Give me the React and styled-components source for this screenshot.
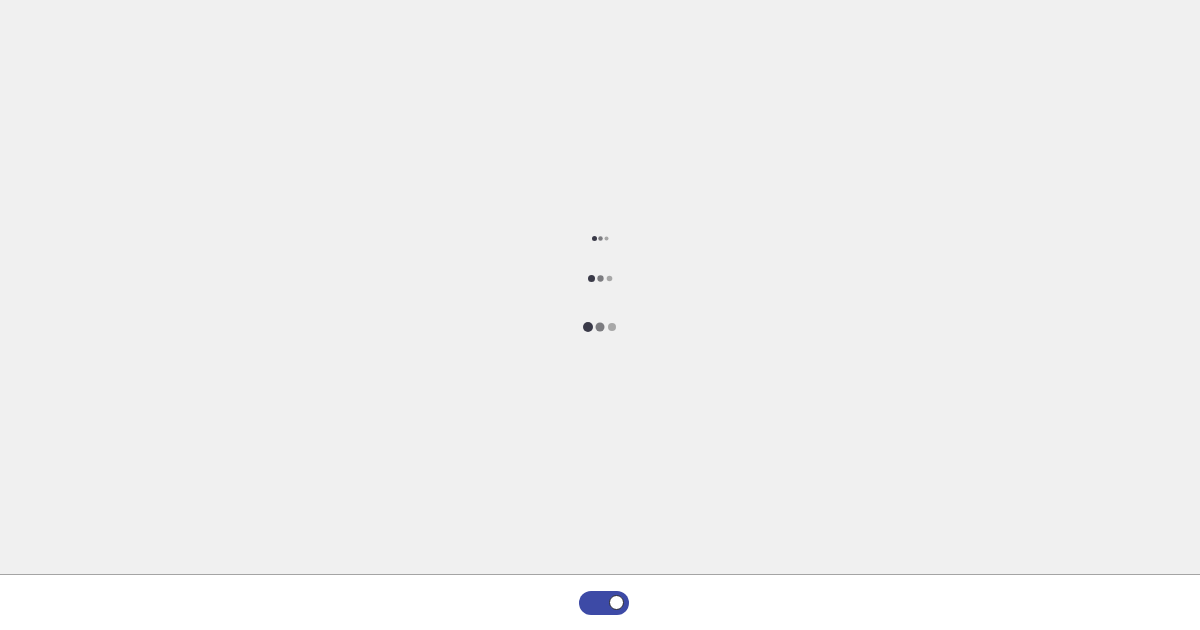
import React from "react";
import styled, { createGlobalStyle } from "styled-components";

const sizes = [
	{ size: 5, gap: 1, top: 236 },
	{ size: 7, gap: 2, top: 34 },
	{ size: 10, gap: 2, top: 40 },
];

const App = () => {
	return (
		<>
			<GlobalStyle />
			<Page>
				<Stage>
					{sizes.map((s, i) => (
						<DotRow key={i} $gap={s.gap} $top={s.top}>
							<Dot $size={s.size} $tone="dark" />
							<Dot $size={s.size} $tone="mid" />
							<Dot $size={s.size} $tone="light" />
						</DotRow>
					))}
				</Stage>
				<Footer>
					<Toggle aria-label="toggle">
						<Knob />
					</Toggle>
				</Footer>
			</Page>
		</>
	);
};

export default App;

/* ========== STYLES ========== */
const GlobalStyle = createGlobalStyle`
	html, body {
		margin: 0;
		padding: 0;
		font-family: "Liberation Sans", Arial, sans-serif;
		background: #ffffff;
	}
`;

const Page = styled.div`
	width: 1200px;
	height: 630px;
	display: flex;
	flex-direction: column;
`;

const Stage = styled.div`
	height: 574px;
	background-color: #f0f0f0;
	display: flex;
	flex-direction: column;
	align-items: center;
	border-bottom: 1px solid #a4a4a4;
`;

const DotRow = styled.div`
	display: flex;
	align-items: center;
	gap: ${(p) => p.$gap}px;
	margin-top: ${(p) => p.$top}px;
`;

const tones = {
	dark: { color: "#3a3a48", scale: 1 },
	mid: { color: "#7c7c80", scale: 0.9 },
	light: { color: "#a8a8a8", scale: 0.8 },
};

const Dot = styled.span`
	display: block;
	width: ${(p) => p.$size}px;
	height: ${(p) => p.$size}px;
	border-radius: 50%;
	background-color: ${(p) => tones[p.$tone].color};
	transform: scale(${(p) => tones[p.$tone].scale});
`;

const Footer = styled.div`
	flex: 1;
	background-color: #ffffff;
	display: flex;
	align-items: center;
	justify-content: center;
	padding-left: 8px;
`;

const Toggle = styled.button`
	width: 50px;
	height: 24px;
	border: none;
	border-radius: 12px;
	background-color: #3d4aa6;
	padding: 0 5px 0 0;
	display: flex;
	align-items: center;
	justify-content: flex-end;
	cursor: pointer;
`;

const Knob = styled.span`
	display: block;
	width: 13px;
	height: 13px;
	border-radius: 50%;
	background-color: #ffffff;
	border: 1.5px solid #2a2a33;
`;
